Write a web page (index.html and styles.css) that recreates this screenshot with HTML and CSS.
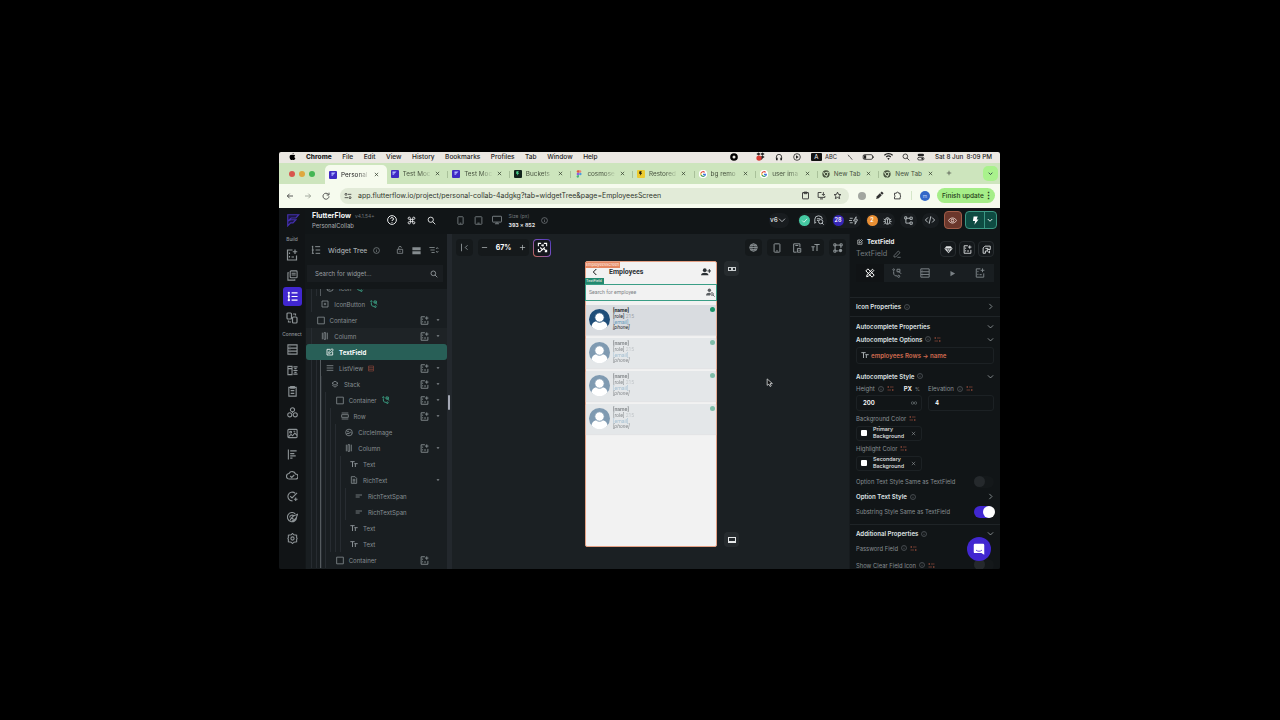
FILE: index.html
```html
<!DOCTYPE html>
<html lang="en">
<head>
<meta charset="UTF-8">
<meta name="viewport" content="width=device-width, initial-scale=1.0">
<title>FlutterFlow - PersonalCollab</title>
<link rel="stylesheet" href="styles.css">
</head>
<body>

<!-- icon sprite -->
<svg class="sprite" width="0" height="0">
  <symbol id="apple" viewBox="0 0 24 24"><path class="solid" d="M16 0c0 3-2 5-4.500 5C11.500 2.500 13.500 .5 16 0zM12 7c1.500 0 2.500-1 4.500-1 2 0 3.500 1 4.500 2.500-4 2.500-3 7.500 1 9C20.500 22 19 24 17 24c-2 0-2.500-1-4.500-1S10 24 8 24c-3 0-6-6-6-10.500C2 9 5 6 7.500 6c2 0 3 1 4.500 1z"/></symbol>
  <symbol id="back" viewBox="0 0 24 24"><path d="M21 12H4M11 5l-7 7 7 7"/></symbol>
  <symbol id="fwd" viewBox="0 0 24 24"><path d="M3 12h17M13 5l7 7-7 7"/></symbol>
  <symbol id="reload" viewBox="0 0 24 24"><path d="M19 7a9 9 0 1 0 2 6M21 2v7h-7"/></symbol>
  <symbol id="tune" viewBox="0 0 24 24"><circle cx="6" cy="7" r="3"/><circle cx="18" cy="17" r="3"/><path d="M12 7h10M2 17h10"/></symbol>
  <symbol id="clip" viewBox="0 0 24 24"><rect x="4" y="4" width="16" height="17" rx="1"/><path d="M8 3h8v4H8z"/></symbol>
  <symbol id="install" viewBox="0 0 24 24"><path d="M12 4H3v13h18v-4M8 21h8M17 3v8M13 8l4 4 4-4"/></symbol>
  <symbol id="star" viewBox="0 0 24 24"><path d="M12 3l2.700 6 6.300.600-4.800 4.200 1.500 6.500L12 17l-5.700 3.300 1.500-6.500L3 9.600 9.300 9z"/></symbol>
  <symbol id="puzzle" viewBox="0 0 24 24"><path d="M4 6h5a3 3 0 0 1 6 0h4v5a3 3 0 0 1 0 5v5H4v-5a3 3 0 0 0 0-5z"/></symbol>
  <symbol id="pen" viewBox="0 0 24 24"><path class="solid" d="M3 21l2-7 8-8 5 5-8 8z"/><path class="solid" d="M14 5l4-4 5 5-4 4z"/></symbol>
  <symbol id="close" viewBox="0 0 24 24"><path d="M4 4l16 16M20 4L4 20"/></symbol>
  <symbol id="plus" viewBox="0 0 24 24"><path d="M12 3v18M3 12h18"/></symbol>
  <symbol id="minus" viewBox="0 0 24 24"><path d="M3 12h18"/></symbol>
  <symbol id="down" viewBox="0 0 24 24"><path d="M3 8l9 9 9-9"/></symbol>
  <symbol id="right" viewBox="0 0 24 24"><path d="M8 3l9 9-9 9"/></symbol>
  <symbol id="left" viewBox="0 0 24 24"><path d="M16 3l-9 9 9 9"/></symbol>
  <symbol id="caret" viewBox="0 0 24 24"><path class="solid" d="M3 8h18l-9 10z"/></symbol>
  <symbol id="ff" viewBox="0 0 24 24"><path class="solid" d="M5 5h14l-5 5H5zM5 11.500h9L9.500 16H5z"/></symbol>
  <symbol id="chrome" viewBox="0 0 24 24"><circle class="solid" cx="12" cy="12" r="11"/><circle cx="12" cy="12" r="5" stroke="#cfe5c0"/><path stroke="#cfe5c0" d="M12 7h10M7.700 14.500L3 6M16.300 14.500L11 23"/></symbol>
  <symbol id="google" viewBox="0 0 24 24"><circle cx="12" cy="12" r="13" fill="#fff" stroke="none"/><path stroke="#e0473c" stroke-width="3.500" d="M6 9a7 7 0 0 1 11-2"/><path stroke="#eab42c" stroke-width="3.500" d="M6 9a7 7 0 0 0 0 6"/><path stroke="#3c9c55" stroke-width="3.500" d="M6 15a7 7 0 0 0 10 3"/><path stroke="#4379da" stroke-width="3.500" d="M16 18a7 7 0 0 0 3-5h-7"/></symbol>
  <symbol id="figma" viewBox="0 0 24 24"><path fill="#e3573b" stroke="none" d="M12 1H8a3.700 3.700 0 0 0 0 7.300h4z"/><path fill="#ee8172" stroke="none" d="M12 1h4a3.700 3.700 0 0 1 0 7.300h-4z"/><path fill="#915be0" stroke="none" d="M12 8.300H8a3.700 3.700 0 0 0 0 7.300h4z"/><circle cx="16" cy="12" r="3.700" fill="#4b9fe0" stroke="none"/><path fill="#43b47a" stroke="none" d="M12 15.600H8A3.700 3.700 0 1 0 12 19z"/></symbol>
  <symbol id="record" viewBox="0 0 24 24"><circle cx="12" cy="12" r="8" stroke-width="7"/></symbol>
  <symbol id="dropbox" viewBox="0 0 24 24"><path class="solid" d="M7 1l5 4-5 4-6-4zM17 1l6 4-6 4-5-4zM17 9l6 4-6 4-5-4zM12 14l6 4-6 4z"/><circle cx="8" cy="16" r="7" fill="#d63a31" stroke="none"/></symbol>
  <symbol id="phones" viewBox="0 0 24 24"><path d="M4 17v-5a8 8 0 0 1 16 0v5"/><path class="solid" d="M3 14h5v8H3zM16 14h5v8h-5z"/></symbol>
  <symbol id="playc" viewBox="0 0 24 24"><circle cx="12" cy="12" r="10"/><path class="solid" d="M9 7l8 5-8 5z"/></symbol>
  <symbol id="slash" viewBox="0 0 24 24"><path d="M4 3l16 18M4 7l3 1M17 19l3 3"/></symbol>
  <symbol id="battery" viewBox="0 0 36 24"><rect x="2" y="5" width="28" height="14" rx="4"/><path class="solid" d="M4 7h7v10H4zM32 10h2v5h-2z"/></symbol>
  <symbol id="wifi" viewBox="0 0 24 24"><path stroke-width="3.500" d="M1 9c6-6 16-6 22 0M6 13.500c4-4 8-4 12 0"/><path class="solid" d="M9 17c2-1.500 4-1.500 6 0l-3 4z"/></symbol>
  <symbol id="search" viewBox="0 0 24 24"><circle cx="10" cy="10" r="7"/><path d="M15 15l7 7"/></symbol>
  <symbol id="control" viewBox="0 0 24 24"><rect class="solid" x="2" y="2" width="19" height="8" rx="4"/><rect x="2" y="13" width="19" height="8" rx="4"/><circle class="solid" cx="16" cy="17" r="3"/></symbol>
  <symbol id="help" viewBox="0 0 24 24"><circle cx="12" cy="12" r="10.500"/><path d="M8.500 9a3.500 3.500 0 1 1 3.500 4v1.500M12 17v2"/></symbol>
  <symbol id="cmd" viewBox="0 0 24 24"><path d="M9 9V6a3 3 0 1 0-3 3h12a3 3 0 1 0-3-3v12a3 3 0 1 0 3-3H6a3 3 0 1 0 3 3z"/></symbol>
  <symbol id="info" viewBox="0 0 24 24"><circle cx="12" cy="12" r="10"/><path d="M12 11v6M12 6.500v2"/></symbol>
  <symbol id="mobile" viewBox="0 0 24 24"><rect x="5" y="2" width="14" height="20" rx="1.500"/><path d="M10 19h4"/></symbol>
  <symbol id="tablet" viewBox="0 0 24 24"><rect x="3" y="2" width="18" height="20" rx="1.500"/><path d="M9 19h6"/></symbol>
  <symbol id="desktop" viewBox="0 0 24 24"><rect x="1" y="3" width="22" height="14" rx="1.500"/><path d="M12 17v4M7 21h10"/></symbol>
  <symbol id="tree" viewBox="0 0 24 24"><path d="M2 4h3M10 4h12M2 12h5M11 12h11M2 20h5M11 20h11M4 2v18"/></symbol>
  <symbol id="lock" viewBox="0 0 24 24"><path d="M4 10h16v12H4zM8 10V5a4 4 0 0 1 8 0v1M12 14v4"/></symbol>
  <symbol id="rows" viewBox="0 0 24 24"><path class="solid" d="M1 3h22v8H1zM1 14h22v8H1z"/></symbol>
  <symbol id="sort" viewBox="0 0 28 24"><path d="M1 5h15M4 12h12M7 19h9M20 9l3-4 3 4M20 15l3 4 3-4"/></symbol>
  <symbol id="addbox" viewBox="0 0 24 24"><path d="M13 2H3v20h18V13M18 1v9M13.500 5.500h9M7 7v3M7 14v3M11 16h5"/></symbol>
  <symbol id="pages" viewBox="0 0 24 24"><rect x="7" y="2" width="15" height="15" rx="2"/><path d="M4 6H2v16h15v-2M10 7h9M10 11h9"/></symbol>
  <symbol id="navtree" viewBox="0 0 24 24"><circle class="solid" cx="4" cy="4" r="2.500"/><circle class="solid" cx="4" cy="12" r="2.500"/><circle class="solid" cx="4" cy="20" r="2.500"/><path d="M4 4v16M10 4h13M10 12h13M10 20h13"/></symbol>
  <symbol id="story" viewBox="0 0 24 24"><rect x="2" y="2" width="9" height="12" rx="2"/><rect x="13" y="10" width="9" height="12" rx="2"/><path d="M14 4h5v3M5 17v3h5"/></symbol>
  <symbol id="db" viewBox="0 0 24 24"><path d="M2 2h20v20H2zM2 9h20M2 15.500h20M6 5.500h1M6 12h1M6 19h1"/></symbol>
  <symbol id="types" viewBox="0 0 24 24"><path d="M2 3h9v18H2zM2 8h9M14 4h9M14 12h9M14 20h9M16 8h5M16 16h5"/></symbol>
  <symbol id="state" viewBox="0 0 24 24"><path d="M4 3h16v19H4zM8 1h8v4H8zM8 10h8M8 16h8"/></symbol>
  <symbol id="api" viewBox="0 0 24 24"><circle cx="12" cy="6" r="4.500"/><circle cx="6" cy="17" r="4.500"/><circle cx="18" cy="17" r="4.500"/><path d="M12 10v3"/></symbol>
  <symbol id="media" viewBox="0 0 24 24"><rect x="2" y="3" width="20" height="18" rx="2"/><circle cx="8" cy="9" r="2"/><path d="M3 19l6-5 3 3 5-6 5 5M14 7h4"/></symbol>
  <symbol id="func" viewBox="0 0 24 24"><path d="M3 1v22M7 4h14M7 10h9M7 15h12M7 20h5"/></symbol>
  <symbol id="cloud" viewBox="0 0 24 24"><path d="M7 20a5.500 5.500 0 0 1-1-11 7 7 0 0 1 13 1 5 5 0 0 1 0 10zM8.500 14l3 3 5-5"/></symbol>
  <symbol id="test" viewBox="0 0 24 24"><path d="M18 5a9.500 9.500 0 1 0-6 16.500M7 11l4 4L22 4M19 14v8M15 18h8"/></symbol>
  <symbol id="theme" viewBox="0 0 24 24"><path d="M18 4a10 10 0 1 0 3 8M6 12a5 5 0 0 1 9-3M7 18c2-6 7-10 16-13-2 8-7 13-13 15M9 14h5M12 17h5"/></symbol>
  <symbol id="gear" viewBox="0 0 24 24"><circle cx="12" cy="12" r="3.500"/><path d="M9 4l3-3 3 3 6 1v5l1 2-1 2v5l-6 1-3 3-3-3-6-1v-5l-1-2 1-2V5z"/></symbol>
  <symbol id="box" viewBox="0 0 24 24"><path d="M2 2h20v20H2z"/></symbol>
  <symbol id="iconbtn" viewBox="0 0 24 24"><path d="M3 3h18v18H3zM12 8.500v7M8.500 12h7"/></symbol>
  <symbol id="cols" viewBox="0 0 24 24"><path d="M4 2v20M9 2h5v20H9zM19 2v20"/></symbol>
  <symbol id="edit" viewBox="0 0 24 24"><path d="M13 4H3v17h17V11M8 16l1-5 9-9 4 4-9 9z"/></symbol>
  <symbol id="list" viewBox="0 0 24 24"><path d="M2 5h20M2 12h20M2 19h20"/></symbol>
  <symbol id="stack" viewBox="0 0 24 24"><path d="M12 2l9 6-9 6-9-6zM3 13l9 7 9-7"/></symbol>
  <symbol id="rowic" viewBox="0 0 24 24"><path d="M2 3h20M2 21h20M2 8h20v8H2z"/></symbol>
  <symbol id="circimg" viewBox="0 0 24 24"><circle cx="12" cy="12" r="10"/><circle cx="9" cy="9" r="1.500"/><path d="M4 17l5-3 3 2 4-6 5 5"/></symbol>
  <symbol id="doc" viewBox="0 0 24 24"><path d="M4 2h11l5 5v15H4zM8 10h8M8 14h8M8 18h8"/></symbol>
  <symbol id="span" viewBox="0 0 24 24"><path d="M2 9h19M2 15h12"/></symbol>
  <symbol id="tt" viewBox="0 0 24 24"><path stroke-width="3" d="M1 5h13M7.500 5v16M13 11h10M16 11v10"/></symbol>
  <symbol id="ttsize" viewBox="0 0 24 24"><path stroke-width="3" d="M9 4h14M16 4v17M1 10h9M5.500 10v11"/></symbol>
  <symbol id="flow" viewBox="0 0 24 24"><circle cx="4" cy="4" r="2"/><path d="M4 8v4c0 6 4 7 8 7M12 3v6h5l5 5M12 3h7v6h-4"/><circle cx="16" cy="20" r="2.500"/></symbol>
  <symbol id="swap" viewBox="0 0 28 24"><path d="M2 6h6M12 6h14M7 2L3 6l4 4M2 18h14M20 18h6M21 14l4 4-4 4"/></symbol>
  <symbol id="collapse" viewBox="0 0 24 24"><path d="M4 2v20M20 6l-6 6 6 6"/></symbol>
  <symbol id="aibox" viewBox="0 0 24 24"><path d="M9 3H3v6M15 3h6v6M3 15v6h5M21 17v4h-4M13 5v5M9 7h6M7 12l4 4M17 12l-9 8M15 15l5 4"/></symbol>
  <symbol id="globe" viewBox="0 0 24 24"><circle cx="12" cy="12" r="10"/><path d="M2 12h20M12 2c-6 6-6 14 0 20M12 2c6 6 6 14 0 20M4 7h16M4 17h16"/></symbol>
  <symbol id="dark" viewBox="0 0 24 24"><path d="M19 10V2H4v20h7M8 6h7M13 13h8v9h-8zM17 16v3"/></symbol>
  <symbol id="bound" viewBox="0 0 24 24"><path d="M5 5v14M5 5h14M5 19h8M19 5v7M2 2h5v5H2zM17 2h5v5h-5zM2 17h5v5H2z"/><circle class="solid" cx="18" cy="18" r="4"/></symbol>
  <symbol id="check" viewBox="0 0 24 24"><path d="M4 12l6 6L21 6"/></symbol>
  <symbol id="chat" viewBox="0 0 24 24"><path d="M5 17l-3 3V10a9 8 0 0 1 18 0M7 9h8M7 13h4"/><circle cx="16" cy="16" r="5"/><path d="M19 19l4 4"/></symbol>
  <symbol id="power" viewBox="0 0 24 24"><path d="M2 6h8M0 12h8M2 18h8M19 2l-7 11h5l-1 9 7-12h-5z"/></symbol>
  <symbol id="bug" viewBox="0 0 24 24"><path d="M6 8h12v8a6 6 0 0 1-12 0zM12 8v13M8 8a4 4 0 0 1 8 0M2 8l4 3M22 8l-4 3M1 15h5M18 15h5M3 22l4-4M21 22l-4-4"/></symbol>
  <symbol id="branch" viewBox="0 0 24 24"><path d="M2 2h5v6H2zM16 3h6v6h-6zM16 16h6v6h-6zM7 6h9M5 8v11h11"/></symbol>
  <symbol id="code" viewBox="0 0 24 24"><path d="M7 6l-6 6 6 6M17 6l6 6-6 6M14 3l-4 18"/></symbol>
  <symbol id="eye" viewBox="0 0 24 24"><path d="M1 12c6-9 16-9 22 0-6 9-16 9-22 0z"/><circle cx="12" cy="12" r="3.500"/></symbol>
  <symbol id="bolt" viewBox="0 0 24 24"><path class="solid" d="M7 1h11l-3 8h5L9 23l2-10H5z"/></symbol>
  <symbol id="gem" viewBox="0 0 24 24"><path class="solid" d="M6 3h12l5 7-11 12L1 10z"/><path stroke="#14181b" stroke-width="1.500" d="M3 10h18M9 10l3 9 3-9"/></symbol>
  <symbol id="cmp" viewBox="0 0 24 24"><path d="M3 22V8l5-5h14v9h-8v4h-5v6zM9 9h8M14 16l6 5M20 15v6"/></symbol>
  <symbol id="tools" viewBox="0 0 24 24"><path d="M2 7l5-5 15 15-5 5zM4 21l1-5L18 3l3 3L8 20z"/></symbol>
  <symbol id="play" viewBox="0 0 24 24"><path class="solid" d="M5 3l16 9-16 9z"/></symbol>
  <symbol id="pencil" viewBox="0 0 24 24"><path d="M3 17L16 3l5 5L8 21H3zM13 22h10"/></symbol>
  <symbol id="inf" viewBox="0 0 24 24"><circle cx="6" cy="12" r="5"/><circle cx="18" cy="12" r="5"/></symbol>
  <symbol id="personadd" viewBox="0 0 24 24"><circle class="solid" cx="9" cy="7.500" r="4.500"/><path class="solid" d="M0 20c0-8 18-8 18 0z"/><path d="M20 5v9M15.500 9.500h9"/></symbol>
  <symbol id="personfind" viewBox="0 0 24 24"><circle class="solid" cx="9" cy="6" r="4.500"/><path class="solid" d="M0 20c0-7 7-8 11-7v7z"/><circle cx="16" cy="16" r="3.500"/><path d="M18 18l5 5"/></symbol>
  <symbol id="avatar" viewBox="0 0 42 42"><circle class="solid" cx="21" cy="21" r="21"/><path fill="#fff" stroke="none" d="M5 35c1-9 8-11 16-11s15 2 16 11a21 21 0 0 1-32 0z"/><circle cx="21" cy="17" r="9.500" fill="#fff" stroke="currentColor" stroke-width="2"/></symbol>
</svg>

<div class="screen">

  <!-- mac menu bar -->
  <div class="menubar">
    <svg class="ic s8 apple"><use href="#apple"/></svg>
    <b>Chrome</b><span>File</span><span>Edit</span><span>View</span><span>History</span><span>Bookmarks</span><span>Profiles</span><span>Tab</span><span>Window</span><span>Help</span>
    <div class="status">
      <svg class="ic s8 rec"><use href="#record"/></svg>
      <svg class="ic s9 drop"><use href="#dropbox"/></svg>
      <svg class="ic s8 hp"><use href="#phones"/></svg>
      <svg class="ic s8 pl"><use href="#playc"/></svg>
      <i class="lang">A</i><em class="abc">ABC</em>
      <svg class="ic s6 sl"><use href="#slash"/></svg>
      <svg class="ic batt"><use href="#battery"/></svg>
      <svg class="ic s9 wf"><use href="#wifi"/></svg>
      <svg class="ic s8 se"><use href="#search"/></svg>
      <svg class="ic s8 cc"><use href="#control"/></svg>
      <span class="clock">Sat 8 Jun&nbsp; 8:09 PM</span>
    </div>
  </div>

  <!-- browser tabs -->
  <div class="tabs">
    <div class="lights"><i class="red"></i><i class="amber"></i><i class="green"></i></div>
    <div class="tab active"><i class="fav ff"><svg class="ic s7"><use href="#ff"/></svg></i><span>Personal</span><svg class="ic s6"><use href="#close"/></svg></div>
    <div class="tab"><i class="fav ff"><svg class="ic s7"><use href="#ff"/></svg></i><span>Test Moc</span><svg class="ic s6"><use href="#close"/></svg></div>
    <div class="tab sep"><i class="fav ff"><svg class="ic s7"><use href="#ff"/></svg></i><span>Test Moc</span><svg class="ic s6"><use href="#close"/></svg></div>
    <div class="tab sep"><i class="fav supa"><svg class="ic s6"><use href="#bolt"/></svg></i><span>Buckets</span><svg class="ic s6"><use href="#close"/></svg></div>
    <div class="tab sep"><i class="fav"><svg class="ic s8"><use href="#figma"/></svg></i><span>cosmose</span><svg class="ic s6"><use href="#close"/></svg></div>
    <div class="tab sep"><i class="fav miro"><svg class="ic s6"><use href="#bolt"/></svg></i><span>Restored</span><svg class="ic s6"><use href="#close"/></svg></div>
    <div class="tab sep"><i class="fav"><svg class="ic s8"><use href="#google"/></svg></i><span>bg remo</span><svg class="ic s6"><use href="#close"/></svg></div>
    <div class="tab sep"><i class="fav"><svg class="ic s8"><use href="#google"/></svg></i><span>user ima</span><svg class="ic s6"><use href="#close"/></svg></div>
    <div class="tab sep"><i class="fav"><svg class="ic s8"><use href="#chrome"/></svg></i><span class="full">New Tab</span><svg class="ic s6"><use href="#close"/></svg></div>
    <div class="tab sep"><i class="fav"><svg class="ic s8"><use href="#chrome"/></svg></i><span class="full">New Tab</span><svg class="ic s6"><use href="#close"/></svg></div>
    <div class="newtab"><svg class="ic s6"><use href="#plus"/></svg></div>
    <div class="tabmenu"><svg class="ic s5"><use href="#down"/></svg></div>
  </div>

  <!-- address bar -->
  <div class="toolbar">
    <div class="nav"><svg class="ic s8"><use href="#back"/></svg><svg class="ic s8 off"><use href="#fwd"/></svg><svg class="ic s8"><use href="#reload"/></svg></div>
    <div class="omni">
      <svg class="ic s8"><use href="#tune"/></svg>
      <span class="url">app.flutterflow.io/project/personal-collab-4adgkg?tab=widgetTree&amp;page=EmployeesScreen</span>
      <div class="omni-icons"><svg class="ic s9"><use href="#clip"/></svg><svg class="ic s9"><use href="#install"/></svg><svg class="ic s9"><use href="#star"/></svg></div>
    </div>
    <div class="ext"><i class="ghost"></i><svg class="ic s9"><use href="#pen"/></svg><svg class="ic s9"><use href="#puzzle"/></svg></div>
    <i class="me">m</i>
    <div class="update">Finish update<b>⋮</b></div>
  </div>

  <div class="app">

    <!-- left nav rail -->
    <div class="rail">
      <div class="logo"><svg viewBox="0 0 24 24"><path d="M3 3h19l-5 5.500H9L3 14zM3 14l5-2.500h9L12 17H8l-5 5z"/></svg></div>
      <label class="build">Build</label>
      <div><svg class="ic s12"><use href="#addbox"/></svg></div>
      <div><svg class="ic s11"><use href="#pages"/></svg></div>
      <div class="on"><svg class="ic s11"><use href="#navtree"/></svg></div>
      <div><svg class="ic s12"><use href="#story"/></svg></div>
      <label class="connect">Connect</label>
      <div><svg class="ic s11"><use href="#db"/></svg></div>
      <div><svg class="ic s11"><use href="#types"/></svg></div>
      <div><svg class="ic s11"><use href="#state"/></svg></div>
      <div><svg class="ic s11"><use href="#api"/></svg></div>
      <div><svg class="ic s11"><use href="#media"/></svg></div>
      <div><svg class="ic s11"><use href="#func"/></svg></div>
      <div><svg class="ic s12"><use href="#cloud"/></svg></div>
      <div><svg class="ic s11"><use href="#test"/></svg></div>
      <div><svg class="ic s11"><use href="#theme"/></svg></div>
      <div><svg class="ic s11"><use href="#gear"/></svg></div>
    </div>

    <div class="work">
      <!-- app header -->
      <div class="header">
        <div class="project"><div><b>FlutterFlow</b><small>v4.1.54+</small></div><span>PersonalCollab</span></div>
        <div class="quick"><svg class="ic s10"><use href="#help"/></svg><svg class="ic s9"><use href="#cmd"/></svg><svg class="ic s9"><use href="#search"/></svg></div>
        <div class="devices"><svg class="ic s9"><use href="#mobile"/></svg><svg class="ic s9"><use href="#tablet"/></svg><svg class="ic s10"><use href="#desktop"/></svg></div>
        <div class="size"><small>Size (px)</small><b>393 × 852</b></div>
        <svg class="ic s7 sizeinfo"><use href="#info"/></svg>
        <div class="actions">
          <div class="pill ver">v6 <svg class="ic s8"><use href="#down"/></svg></div>
          <div class="pill"><i class="dot teal"><svg class="ic s7"><use href="#check"/></svg></i><svg class="ic s10"><use href="#chat"/></svg></div>
          <div class="pill"><i class="dot blue">28</i><svg class="ic s9"><use href="#power"/></svg></div>
          <div class="pill"><i class="dot orange">2</i><svg class="ic s9"><use href="#bug"/></svg></div>
          <div class="pill one"><svg class="ic s9"><use href="#branch"/></svg></div>
          <div class="pill one"><svg class="ic s10"><use href="#code"/></svg></div>
          <div class="preview"><svg class="ic s9"><use href="#eye"/></svg></div>
          <div class="run"><svg class="ic s9"><use href="#bolt"/></svg><svg class="ic s6"><use href="#down"/></svg></div>
        </div>
      </div>

      <div class="panes">
        <!-- widget tree -->
        <div class="left">
          <div class="lefthead"><svg class="ic s10"><use href="#tree"/></svg><span>Widget Tree</span><svg class="ic s7"><use href="#info"/></svg>
            <div class="tools"><svg class="ic s8"><use href="#lock"/></svg><svg class="ic s9"><use href="#rows"/></svg><svg class="ic s10"><use href="#sort"/></svg></div></div>
          <div class="find"><span>Search for widget...</span><svg class="ic s8"><use href="#search"/></svg></div>
          <div class="tree">
            <div class="row d2"><svg class="ic s8"><use href="#circimg"/></svg><span>Icon</span><svg class="ic s8 act"><use href="#flow"/></svg></div>
            <div class="row d1"><svg class="ic s8"><use href="#iconbtn"/></svg><span>IconButton</span><svg class="ic s8 act"><use href="#flow"/></svg></div>
            <div class="row d0"><svg class="ic s9"><use href="#box"/></svg><span>Container</span><div class="end"><svg class="ic s9"><use href="#addbox"/></svg><svg class="ic s4"><use href="#caret"/></svg></div></div>
            <div class="row d1 hover"><svg class="ic s8"><use href="#cols"/></svg><span>Column</span><div class="end"><svg class="ic s9"><use href="#addbox"/></svg><svg class="ic s4"><use href="#caret"/></svg></div></div>
            <div class="row d2 selected"><svg class="ic s8"><use href="#edit"/></svg><span>TextField</span></div>
            <div class="row d2"><svg class="ic s8"><use href="#list"/></svg><span>ListView</span><svg class="ic query"><use href="#db"/></svg><div class="end"><svg class="ic s9"><use href="#addbox"/></svg><svg class="ic s4"><use href="#caret"/></svg></div></div>
            <div class="row d3"><svg class="ic s9"><use href="#stack"/></svg><span>Stack</span><div class="end"><svg class="ic s9"><use href="#addbox"/></svg><svg class="ic s4"><use href="#caret"/></svg></div></div>
            <div class="row d4"><svg class="ic s9"><use href="#box"/></svg><span>Container</span><svg class="ic s8 act"><use href="#flow"/></svg><div class="end"><svg class="ic s9"><use href="#addbox"/></svg><svg class="ic s4"><use href="#caret"/></svg></div></div>
            <div class="row d5"><svg class="ic s8"><use href="#rowic"/></svg><span>Row</span><div class="end"><svg class="ic s9"><use href="#addbox"/></svg><svg class="ic s4"><use href="#caret"/></svg></div></div>
            <div class="row d6"><svg class="ic s9"><use href="#circimg"/></svg><span>CircleImage</span></div>
            <div class="row d6"><svg class="ic s8"><use href="#cols"/></svg><span>Column</span><div class="end"><svg class="ic s9"><use href="#addbox"/></svg><svg class="ic s4"><use href="#caret"/></svg></div></div>
            <div class="row d7"><svg class="ic s8"><use href="#tt"/></svg><span>Text</span></div>
            <div class="row d7"><svg class="ic s8"><use href="#doc"/></svg><span>RichText</span><div class="end"><svg class="ic s4"><use href="#caret"/></svg></div></div>
            <div class="row d8"><svg class="ic s8"><use href="#span"/></svg><span>RichTextSpan</span></div>
            <div class="row d8"><svg class="ic s8"><use href="#span"/></svg><span>RichTextSpan</span></div>
            <div class="row d7"><svg class="ic s8"><use href="#tt"/></svg><span>Text</span></div>
            <div class="row d7"><svg class="ic s8"><use href="#tt"/></svg><span>Text</span></div>
            <div class="row d4"><svg class="ic s9"><use href="#box"/></svg><span>Container</span><div class="end"><svg class="ic s9"><use href="#addbox"/></svg><i class="nocaret"></i></div></div>
          </div>
        </div>
        <div class="splitter"><i></i></div>

        <!-- canvas -->
        <div class="canvas">
          <div class="canvasbar">
            <div class="btn"><svg class="ic s9"><use href="#collapse"/></svg></div>
            <div class="zoom"><svg class="ic s7"><use href="#minus"/></svg><b>67%</b><svg class="ic s7"><use href="#plus"/></svg></div>
            <div class="ai"><span><svg class="ic s11"><use href="#aibox"/></svg></span></div>
            <div class="btn push"><svg class="ic s9"><use href="#globe"/></svg></div>
            <div class="group"><svg class="ic s10"><use href="#mobile"/></svg><svg class="ic s10"><use href="#dark"/></svg><svg class="ic s9"><use href="#ttsize"/></svg></div>
            <div class="btn"><svg class="ic s10"><use href="#bound"/></svg></div>
          </div>
          <div class="stage">
            <div class="phone">
              <i class="tag">EmployeesScreen</i>
              <div class="appbar"><svg class="ic s8 backic"><use href="#left"/></svg><b>Employees</b><svg class="ic s10"><use href="#personadd"/></svg></div>
              <div class="field"><i class="tag">TextField</i><span>Search for employee</span><svg class="ic s9"><use href="#personfind"/></svg></div>
              <div class="card"><svg class="ic avatar"><use href="#avatar"/></svg><div class="who"><b>[name]</b><span>[role] <small>215</small></span><span class="mail">[email]</span><i>[phone]</i></div><i class="online"></i></div>
              <div class="card dim"><svg class="ic avatar"><use href="#avatar"/></svg><div class="who"><b>[name]</b><span>[role] <small>215</small></span><span class="mail">[email]</span><i>[phone]</i></div><i class="online"></i></div>
              <div class="card dim"><svg class="ic avatar"><use href="#avatar"/></svg><div class="who"><b>[name]</b><span>[role] <small>215</small></span><span class="mail">[email]</span><i>[phone]</i></div><i class="online"></i></div>
              <div class="card dim"><svg class="ic avatar"><use href="#avatar"/></svg><div class="who"><b>[name]</b><span>[role] <small>215</small></span><span class="mail">[email]</span><i>[phone]</i></div><i class="online"></i></div>
            </div>
            <div class="side"><div><i class="appbarico"></i></div><div><i class="navico"></i></div></div>
          </div>
          <svg class="cursor" viewBox="0 0 12 16"><path d="M2 1v11l3-2 2 4 2-1-2-4h4z"/></svg>
        </div>

        <!-- properties -->
        <div class="props">
          <div class="ptitle">
            <div><h4><svg class="ic s6"><use href="#edit"/></svg>TextField</h4><h5>TextField<svg class="ic s8"><use href="#pencil"/></svg></h5></div>
            <div class="pbtns"><i><svg class="ic s9"><use href="#gem"/></svg></i><i><svg class="ic s9"><use href="#addbox"/></svg></i><i><svg class="ic s9"><use href="#cmp"/></svg></i></div>
          </div>
          <div class="ptabs"><i class="on"><svg class="ic s10"><use href="#tools"/></svg></i><i><svg class="ic s10"><use href="#flow"/></svg></i><i><svg class="ic s10"><use href="#db"/></svg></i><i><svg class="ic s7"><use href="#play"/></svg></i><i><svg class="ic s10"><use href="#addbox"/></svg></i></div>
          <div class="prow lined"><b>Icon Properties</b><svg class="ic s6 dimic"><use href="#info"/></svg><svg class="ic s7 chev"><use href="#right"/></svg></div>
          <div class="prow first"><b>Autocomplete Properties</b><svg class="ic s7 chev"><use href="#down"/></svg></div>
          <div class="prow"><b>Autocomplete Options</b><svg class="ic s6 dimic"><use href="#info"/></svg><svg class="ic s7 swap"><use href="#swap"/></svg><svg class="ic s7 chev"><use href="#down"/></svg></div>
          <div class="binding"><svg class="ic s8"><use href="#tt"/></svg>employees Rows → name</div>
          <div class="prow style"><b>Autocomplete Style</b><svg class="ic s6 dimic"><use href="#info"/></svg><svg class="ic s7 chev"><use href="#down"/></svg></div>
          <div class="pair labels">
            <div>Height<svg class="ic s6 dimic"><use href="#info"/></svg><svg class="ic s7 swap"><use href="#swap"/></svg><b>PX</b><small>%</small></div>
            <div>Elevation<svg class="ic s6 dimic"><use href="#info"/></svg><svg class="ic s7 swap"><use href="#swap"/></svg></div>
          </div>
          <div class="pair inputs"><div>200<svg class="ic s6"><use href="#inf"/></svg></div><div>4</div></div>
          <div class="plabel">Background Color<svg class="ic s7 swap"><use href="#swap"/></svg></div>
          <div class="color"><i></i><span>Primary<br>Background</span><svg class="ic s5"><use href="#close"/></svg></div>
          <div class="plabel">Highlight Color<svg class="ic s7 swap"><use href="#swap"/></svg></div>
          <div class="color"><i></i><span>Secondary<br>Background</span><svg class="ic s5"><use href="#close"/></svg></div>
          <div class="prow toggle t1"><span>Option Text Style Same as TextField</span><i class="switch"></i></div>
          <div class="prow toggle"><b>Option Text Style</b><svg class="ic s6 dimic"><use href="#info"/></svg><svg class="ic s7 chev"><use href="#right"/></svg></div>
          <div class="prow toggle"><span>Substring Style Same as TextField</span><i class="switch on"></i></div>
          <div class="prow extra"><b>Additional Properties</b><svg class="ic s6 dimic"><use href="#info"/></svg><svg class="ic s7 chev"><use href="#down"/></svg></div>
          <div class="prow small"><span>Password Field</span><svg class="ic s6 dimic"><use href="#info"/></svg><svg class="ic s7 swap"><use href="#swap"/></svg></div>
          <div class="prow small last"><span>Show Clear Field Icon</span><svg class="ic s6 dimic"><use href="#info"/></svg><svg class="ic s7 swap"><use href="#swap"/></svg><i class="switch"></i></div>
          <div class="intercom"><svg viewBox="0 0 24 24"><path d="M5 3h14a2 2 0 0 1 2 2v17l-5-3H5a2 2 0 0 1-2-2V5a2 2 0 0 1 2-2z" fill="#fff"/><path d="M7 14c3 2.500 7 2.500 10 0" fill="none" stroke="#4a2bd4" stroke-width="1.500"/></svg></div>
        </div>
      </div>
    </div>
  </div>
</div>
</body>
</html>
```
FILE: styles.css
```css
* {
  box-sizing: border-box;
}

body {
  margin: 0;
  background: #000;
  height: 720px;
  overflow: hidden;
  font-family: Inter, "Liberation Sans", sans-serif;
  font-size: 6.5px;
}

i, em {
  font-style: normal;
}

.sprite {
  display: block;
  height: 0;
}

.screen {
  width: 721px;
  height: 417px;
  margin: 151.5px 0 0 279px;
  overflow: hidden;
  display: flex;
  flex-direction: column;
  border-radius: 2px;
}

/* icons */
.ic {
  width: 8px;
  height: 8px;
  flex: none;
  fill: none;
  stroke: currentColor;
  stroke-width: 2.4;
  overflow: visible;
}
.solid {
  fill: currentColor;
  stroke: none;
}
.s4 { width: 4px; height: 4px; }
.s5 { width: 5px; height: 5px; }
.s6 { width: 6px; height: 6px; }
.s7 { width: 7px; height: 7px; }
.s8 { width: 8px; height: 8px; }
.s9 { width: 9px; height: 9px; }
.s10 { width: 10px; height: 10px; }
.s11 { width: 11px; height: 11px; }
.s12 { width: 12px; height: 12px; }

/* menu bar */
.menubar {
  height: 11.5px;
  flex: none;
  background: #ebe8e2;
  color: #222;
  display: flex;
  align-items: center;
  gap: 10.5px;
  padding: 0 8px 1px 9.5px;
  font-size: 6.55px;
  font-weight: 500;
  white-space: nowrap;
}
.menubar b {
  font-weight: 800;
}
.apple {
  width: 7px;
  height: 7px;
  color: #000;
}
.status {
  margin-left: auto;
  display: flex;
  align-items: center;
  font-weight: 400;
}
.rec { color: #000; }
.drop { margin-left: 18px; }
.hp { margin-left: 10px; }
.pl { margin-left: 10px; }
.lang {
  margin-left: 10px;
  width: 11px;
  height: 8px;
  line-height: 8px;
  text-align: center;
  background: #111;
  color: #fff;
  border-radius: 1px;
  font-size: 6px;
}
.abc {
  margin-left: 3px;
  font-size: 5.8px;
}
.sl { margin-left: 10px; }
.batt {
  width: 13px;
  margin-left: 9px;
}
.wf { margin-left: 9px; }
.se { margin-left: 9px; }
.cc { margin-left: 7px; }
.clock {
  margin-left: 10px;
  font-weight: 500;
  font-size: 6.3px;
}

/* tabs */
.tabs {
  height: 21px;
  flex: none;
  background: #cde5bd;
  display: flex;
  align-items: center;
  padding-left: 10px;
  color: #47523f;
}
.lights {
  display: flex;
  gap: 4px;
  width: 36px;
}
.lights i {
  width: 6px;
  height: 6px;
  border-radius: 50%;
}
.red { background: #d8564c; }
.amber { background: #dfa83f; }
.green { background: #44b653; }
.tab {
  width: 61.6px;
  height: 18px;
  padding-left: 4px;
  display: flex;
  align-items: center;
  position: relative;
}
.tab span {
  width: 30px;
  margin: 0 2.500px 0 4px;
  white-space: nowrap;
  font-size: 6.400px;
  -webkit-mask-image: linear-gradient(90deg, #000 55%, rgba(0, 0, 0, .15) 90%);
  mask-image: linear-gradient(90deg, #000 55%, rgba(0, 0, 0, .15) 90%);
}
.tab span.full {
  -webkit-mask-image: none;
  mask-image: none;
}
.tab .ic.s6 {
  width: 5px;
  height: 5px;
  stroke-width: 3.5;
  color: #33402d;
}
.tab .fav .ic.s6 {
  color: inherit;
}
.tab.active {
  height: 19px;
  align-self: flex-end;
  background: #f6fbee;
  border-radius: 5px 5px 0 0;
  color: #222;
}
.tab.sep::before {
  content: "";
  position: absolute;
  left: -1px;
  top: 6px;
  width: 1px;
  height: 7px;
  background: #a9c19a;
}
.fav {
  width: 8px;
  height: 8px;
  flex: none;
  display: flex;
  align-items: center;
  justify-content: center;
  border-radius: 1px;
}
.fav.ff { background: #3f2bc4; color: #aeb4ff; }
.fav.supa { background: #10231b; color: #49d08c; }
.fav.miro { background: #eccb2f; color: #1d1a0b; }
.newtab {
  margin-left: 5px;
  color: #333;
}
.tabmenu {
  margin-left: auto;
  margin-right: 2px;
  width: 15px;
  height: 15px;
  border-radius: 5px;
  background: #a9f28c;
  display: flex;
  align-items: center;
  justify-content: center;
  color: #234;
}
.tabmenu .ic { stroke-width: 4; }

/* address bar */
.toolbar {
  height: 24px;
  flex: none;
  background: #f6fbee;
  display: flex;
  align-items: center;
  padding: 0 0 1px 7px;
  color: #333;
}
.nav {
  display: flex;
  gap: 10px;
  width: 54px;
}
.off { color: #93998d; }
.omni {
  width: 509px;
  height: 16px;
  border-radius: 8px;
  background: #e2ebd8;
  display: flex;
  align-items: center;
  padding: 0 7px 0 4px;
}
.url {
  margin-left: 6px;
  font-size: 6.970px;
  color: #30362e;
  white-space: nowrap;
}
.omni-icons {
  margin-left: auto;
  display: flex;
  gap: 7px;
}
.ext {
  display: flex;
  align-items: center;
  gap: 9px;
  margin-left: 9px;
  padding-right: 9px;
  border-right: 1px solid #d5e6c9;
}
.ghost {
  width: 8px;
  height: 8px;
  border-radius: 50%;
  background: #a2a6a0;
}
.me {
  margin-left: 8px;
  width: 10px;
  height: 10px;
  border-radius: 50%;
  background: #3468c8;
  color: #c6d6f5;
  font-size: 5px;
  line-height: 10px;
  text-align: center;
}
.update {
  margin-left: 7px;
  width: 58px;
  height: 15px;
  border-radius: 8px;
  background: #a5ee88;
  color: #1f3a17;
  font-size: 6.500px;
  font-weight: 500;
  display: flex;
  align-items: center;
  justify-content: space-between;
  padding: 0 2px 0 5px;
  white-space: nowrap;
}
.update b { font-size: 9px; }

/* app shell */
.app {
  flex: 1;
  min-height: 0;
  display: flex;
  background: #111517;
  color: #9aa1a5;
}
.rail {
  width: 26px;
  flex: none;
  display: flex;
  flex-direction: column;
  background: #111416;
  color: #8d9396;
}
.rail div {
  width: 26px;
  height: 21px;
  flex: none;
  display: flex;
  align-items: center;
  justify-content: center;
}
.rail .logo {
  height: 26px;
  padding: 0 0 2px 1px;
}
.logo svg {
  width: 14px;
  height: 14px;
  fill: #1b1640;
  stroke: #4430ae;
  stroke-width: 2;
}
.rail label {
  text-align: center;
  font-size: 4.8px;
  font-weight: 500;
}
.rail .build {
  height: 10px;
  line-height: 10px;
}
.rail .connect {
  height: 10.500px;
  line-height: 12px;
}
.rail .on {
  width: 19px;
  margin-left: 3.500px;
  background: #4127d0;
  border-radius: 3px;
  color: #fff;
  height: 19px;
  margin-top: 1px;
  margin-bottom: 1px;
}
.work {
  flex: 1;
  min-width: 0;
  display: flex;
  flex-direction: column;
}

/* header */
.header {
  height: 26px;
  flex: none;
  display: flex;
  align-items: center;
  padding: 0 3px 2px 7px;
}
.project {
  width: 74.500px;
  padding-top: 2px;
  line-height: 10px;
  white-space: nowrap;
}
.project b {
  color: #f4f5f6;
  font-size: 7.100px;
}
.project small {
  margin-left: 4px;
  font-size: 4.900px;
  color: #71787c;
}
.project span {
  display: block;
  font-size: 5.900px;
  color: #a9aeb1;
}
.quick {
  display: flex;
  align-items: center;
  gap: 10.500px;
  color: #e8eaeb;
}
.devices {
  display: flex;
  align-items: center;
  gap: 9px;
  margin-left: 20px;
  color: #767d80;
}
.size {
  width: 32px;
  margin-left: 7px;
  padding-top: 1px;
  line-height: 8.500px;
  white-space: nowrap;
}
.size small {
  display: block;
  font-size: 5px;
  color: #71787c;
}
.size b {
  font-size: 5.300px;
  color: #e1e3e4;
}
.sizeinfo {
  color: #7c8386;
}
.actions {
  margin-left: auto;
  display: flex;
  align-items: center;
  gap: 4.500px;
  color: #d2d6d8;
}
.pill {
  height: 15px;
  width: 29.500px;
  display: flex;
  align-items: center;
  justify-content: space-between;
  padding: 0 3px 0 1px;
  background: #181c1f;
  border-radius: 7px;
  color: #b7bdc0;
}
.pill.ver {
  width: 20px;
  margin-right: 4px;
  font-weight: 600;
  font-size: 6.300px;
  color: #d2d6d8;
}
.pill.one {
  width: 17.500px;
  padding: 0;
  justify-content: center;
}
.dot {
  width: 11px;
  height: 11px;
  border-radius: 50%;
  display: flex;
  align-items: center;
  justify-content: center;
  color: #fff;
  font-size: 5.500px;
  font-weight: 600;
}
.teal { background: #45c9a2; }
.blue { background: #3626b6; }
.orange { background: #e98f34; }
.preview {
  width: 18px;
  height: 18px;
  margin-left: 0;
  border: 1px solid #a15c48;
  border-radius: 4px;
  background: #6b372c;
  display: flex;
  align-items: center;
  justify-content: center;
  color: #f1dcd6;
}
.run {
  width: 32px;
  height: 18px;
  margin-left: -1px;
  border: 1px solid #3b9783;
  border-radius: 4px;
  background: linear-gradient(90deg, #0e4b42 18px, #3b9783 18px, #3b9783 19px, #0e4b42 19px);
  display: flex;
  align-items: center;
  justify-content: space-between;
  padding: 0 3px 0 5px;
  color: #fff;
}
.run .s6 { stroke-width: 3.5; }

.panes {
  flex: 1;
  min-height: 0;
  display: flex;
}

/* widget tree */
.left {
  width: 142px;
  flex: none;
  display: flex;
  flex-direction: column;
  background: #131719;
}
.lefthead {
  height: 31px;
  flex: none;
  display: flex;
  align-items: center;
  padding: 1px 8px 0 6px;
  color: #858c8f;
}
.lefthead span {
  margin: 0 6px 0 7px;
  font-size: 6.750px;
  font-weight: 500;
  color: #a6acaf;
  white-space: nowrap;
}
.tools {
  margin-left: auto;
  display: flex;
  align-items: center;
  gap: 8px;
}
.find {
  height: 17px;
  flex: none;
  margin: 0 4px 7px 2px;
  padding: 0 6px 0 8px;
  display: flex;
  align-items: center;
  justify-content: space-between;
  background: #191d20;
  font-size: 6.100px;
  color: #9a9fa2;
}
.find .ic { color: #a0a6a9; margin-right: -1px; }
.tree {
  flex: 1;
  min-height: 0;
  overflow: hidden;
  margin-left: 1px;
  background: #191e21;
}
.tree .row:first-child {
  margin-top: -9px;
}
.row {
  --step: 4.800px;
  height: 16px;
  display: flex;
  align-items: center;
  padding-right: 7px;
  color: #878e92;
  font-size: 6.050px;
  white-space: nowrap;
}
.row::before {
  content: "";
  align-self: stretch;
  flex: none;
  margin-left: 5px;
  width: calc(var(--step) * var(--d));
  margin-right: 5.500px;
  background:
    linear-gradient(#555b5f, #555b5f) 9px 0 / 1px 100% no-repeat,
    repeating-linear-gradient(90deg, #272c31 0, #272c31 1px, transparent 1px, transparent 4.800px);
}
.row > .ic:first-of-type {
  width: 8px;
  margin-right: 5px;
}
.d0 { --d: 0; }
.d1 { --d: 1; }
.d2 { --d: 2; }
.d3 { --d: 3; }
.d4 { --d: 4; }
.d5 { --d: 5; }
.d6 { --d: 6; }
.d7 { --d: 7; }
.d8 { --d: 8; }
.row.hover {
  background: #1e2326;
}
.row.selected {
  background: #285f57;
  border-radius: 3px;
  color: #fff;
  font-weight: 700;
}
.row.selected::before {
  background: none;
}
.act {
  margin-left: 5px;
  color: #41b594;
}
.query {
  width: 6px;
  height: 7px;
  margin-left: 5px;
  color: #93483a;
}
.end {
  margin-left: auto;
  display: flex;
  align-items: center;
  gap: 7px;
}
.nocaret {
  width: 4px;
}
.splitter {
  width: 5px;
  flex: none;
  background: #23282d;
}
.splitter i {
  display: block;
  width: 2px;
  height: 15px;
  margin: 161px 0 0 1px;
  background: #a4a8b4;
  border-radius: 1px;
}

/* canvas */
.canvas {
  flex: 1;
  min-width: 0;
  position: relative;
  background: #1b2023;
}
.canvasbar {
  height: 27px;
  display: flex;
  align-items: center;
  padding: 0 3px 0 4px;
  color: #8d9497;
}
.btn {
  width: 17px;
  height: 17px;
  border-radius: 4px;
  background: #15191b;
  display: flex;
  align-items: center;
  justify-content: center;
}
.zoom {
  width: 51px;
  height: 17px;
  margin-left: 5px;
  padding: 0 3px;
  border-radius: 4px;
  background: #15191b;
  display: flex;
  align-items: center;
  justify-content: space-between;
  color: #b9bec0;
}
.zoom b {
  font-size: 7px;
  color: #fff;
}
.ai {
  width: 18px;
  height: 18px;
  margin-left: 4px;
  padding: 1px;
  border-radius: 4px;
  background: linear-gradient(45deg, #c86b4e, #7a50c8 55%, #4b39ad);
}
.ai span {
  height: 16px;
  display: flex;
  align-items: center;
  justify-content: center;
  border-radius: 3px;
  background: #15171d;
  color: #fff;
}
.push {
  margin-left: auto;
}
.group {
  height: 17px;
  width: 57px;
  margin: 0 5px;
  padding: 0 4px 0 5px;
  border-radius: 4px;
  background: #15191b;
  display: flex;
  align-items: center;
  justify-content: space-between;
}
.stage {
  display: flex;
  padding-left: 133px;
}
.phone {
  width: 132px;
  height: 286px;
  position: relative;
  border: 1px solid #e4a084;
  border-radius: 2px;
  background: #f2f2f2;
  color: #2a2f33;
}
.tag {
  position: absolute;
  left: -1px;
  top: 0;
  height: 6px;
  padding: 0 1px;
  background: #e58862;
  color: #fff3ee;
  font-size: 3.900px;
  line-height: 6px;
  white-space: nowrap;
}
.appbar {
  height: 22px;
  display: flex;
  align-items: center;
  padding: 0 5px 3px 5px;
}
.backic {
  stroke-width: 3;
  color: #111;
}
.appbar b {
  margin: 0 auto 0 10px;
  font-family: Roboto, sans-serif;
  font-size: 7px;
}
.field {
  position: relative;
  height: 16.500px;
  margin: 0 -1px 4px;
  border: 1px solid #3a9e86;
  display: flex;
  align-items: center;
  justify-content: space-between;
  padding: 0 1px 0 3px;
  font-family: Roboto, sans-serif;
  font-size: 5.200px;
  color: #7d8286;
}
.field .tag {
  top: -7px;
  background: #23896f;
  width: 19px;
}
.field .ic { color: #5b5f62; }
.card {
  height: 30px;
  margin-bottom: 3px;
  display: flex;
  align-items: center;
  padding: 0 1px 0 3px;
  background: #d9dce0;
  box-shadow: 0 1px 1px #e3e4e6;
}
.avatar {
  width: 21px;
  height: 21px;
  color: #1f4d78;
}
.who {
  margin-left: 3px;
  font-family: Roboto, sans-serif;
  font-size: 5.200px;
  line-height: 5.800px;
}
.who b, .who span, .who > i {
  display: block;
}
.who > i { font-style: italic; }
.who small {
  font-size: 5px;
  color: #9da3a8;
}
.who .mail {
  color: #6a9cbd;
}
.online {
  margin: 2px 0 auto auto;
  width: 5px;
  height: 5px;
  border-radius: 50%;
  background: #1b9469;
}
.card.dim {
  background: #e4e7e9;
}
.dim .avatar {
  color: #7f9ab1;
}
.dim .who, .dim .online {
  opacity: .5;
}
.side {
  height: 286px;
  margin-left: 7px;
  display: flex;
  flex-direction: column;
  justify-content: space-between;
}
.side div {
  width: 15px;
  height: 15px;
  border-radius: 4px;
  background: #262b2e;
  display: flex;
  align-items: center;
  justify-content: center;
}
.appbarico {
  width: 8px;
  height: 4px;
  border: 1px solid #c9cdcf;
  background: linear-gradient(90deg, #262b2e 2px, #c9cdcf 2px, #c9cdcf 4px, #262b2e 4px);
}
.navico {
  width: 8px;
  height: 6px;
  border: 1px solid #e6e8e9;
  border-bottom-width: 2px;
}
.cursor {
  position: absolute;
  left: 314px;
  top: 144px;
  width: 7px;
  height: 10px;
  fill: #111;
  stroke: #c9cccd;
  stroke-width: 1.500;
}

/* properties panel */
.props {
  width: 151px;
  flex: none;
  position: relative;
  padding: 0 6px 0 6px;
  background: #111517;
  border-left: 1px solid #171b1e;
  overflow: hidden;
  font-size: 6.050px;
}
.ptitle {
  height: 30px;
  display: flex;
  justify-content: space-between;
  align-items: center;
}
.ptitle h4, .ptitle h5 {
  margin: 0 0 0 1px;
  display: flex;
  align-items: center;
  gap: 4px;
  font-size: 6.100px;
  line-height: 10px;
  color: #eceeef;
}
.ptitle h4 {
  margin-top: -2px;
}
.ptitle h5 {
  margin: 2px 0 0;
  gap: 6px;
  font-size: 7.300px;
  font-weight: 400;
  color: #747b7f;
}
.pbtns {
  display: flex;
  gap: 3px;
}
.pbtns i {
  width: 16px;
  height: 16px;
  border: 1px solid #262b2e;
  border-radius: 4px;
  background: #14181b;
  display: flex;
  align-items: center;
  justify-content: center;
  color: #dfe2e3;
}
.ptabs {
  height: 18px;
  display: flex;
  background: #191e21;
  color: #7a8185;
}
.ptabs i {
  flex: 1;
  display: flex;
  align-items: center;
  justify-content: center;
}
.ptabs .on {
  background: #101315;
  color: #fff;
}
.prow {
  height: 13px;
  display: flex;
  align-items: center;
  white-space: nowrap;
}
.prow b {
  color: #dfe2e4;
  font-size: 6.150px;
  font-weight: 600;
}
.prow .chev {
  margin-left: auto;
  color: #b1b7ba;
}
.dimic {
  margin-left: 3px;
  color: #656c70;
}
.swap {
  margin-left: 3px;
  color: #a9553f;
}
.prow.lined {
  height: 20px;
  margin: 14.500px -6px 0 -6px;
  padding: 0 6px;
  border-top: 1px solid #1f2427;
  border-bottom: 1px solid #1f2427;
}
.prow.first {
  margin-top: 3px;
}
.binding {
  height: 17px;
  margin-top: 1px;
  padding: 0 4px;
  border: 1px solid #1c2124;
  border-radius: 3px;
  display: flex;
  align-items: center;
  gap: 2px;
  color: #cf6a4f;
  font-weight: 600;
  font-size: 6.150px;
}
.binding .ic { color: #a5abae; }
.prow.style {
  margin-top: 6px;
}
.pair {
  display: flex;
  gap: 6px;
}
.pair div {
  width: 66px;
  display: flex;
  align-items: center;
}
.labels {
  height: 12px;
  color: #8b9296;
}
.labels b {
  margin-left: auto;
  color: #eee;
}
.labels small {
  margin: 0 2px 0 3px;
  font-size: 5px;
}
.inputs {
  height: 16px;
}
.inputs div {
  height: 16px;
  padding: 0 4px 0 6px;
  border: 1px solid #1c2124;
  border-radius: 3px;
  justify-content: space-between;
  color: #fff;
  font-weight: 600;
}
.inputs .ic { color: #767d80; }
.plabel {
  height: 10px;
  margin-top: 3px;
  display: flex;
  align-items: center;
  font-size: 5.900px;
  color: #8b9296;
}
.color {
  width: 66px;
  height: 15px;
  margin: 2px 0 0;
  padding: 0 5px 0 4px;
  border: 1px solid #1c2124;
  border-radius: 3px;
  display: flex;
  align-items: center;
  color: #e6e8e9;
  font-size: 5.400px;
  font-weight: 500;
  line-height: 7px;
}
.color i {
  width: 6px;
  height: 6px;
  margin-right: 6px;
  border-radius: 1px;
  background: #fff;
}
.color .ic {
  margin-left: auto;
  color: #a5abae;
}
.prow.toggle {
  height: 14px;
  margin-top: 1px;
}
.prow.toggle.t1 {
  margin-top: 4px;
}
.prow span {
  color: #868d91;
  font-size: 5.850px;
}
.switch {
  width: 20px;
  height: 12px;
  margin-left: auto;
  border-radius: 6px;
  background: #14181a;
}
.switch::after {
  content: "";
  display: block;
  width: 11px;
  height: 11px;
  border-radius: 50%;
  background: #25292c;
}
.switch.on {
  background: #4127d0;
}
.switch.on::after {
  width: 12px;
  height: 12px;
  margin-left: 9px;
  background: #fff;
}
.prow.extra {
  height: 19px;
  margin: 5px -6px 0 -6px;
  padding: 0 6px;
  border-top: 1px solid #1f2427;
}
.prow.small {
  height: 11px;
}
.prow.last {
  margin-top: 6px;
}
.intercom {
  position: absolute;
  right: 9px;
  bottom: 7.500px;
  width: 24px;
  height: 24px;
  border-radius: 50%;
  background: #4127d0;
  display: flex;
  align-items: center;
  justify-content: center;
}
.intercom svg {
  width: 14px;
  height: 14px;
}
```
